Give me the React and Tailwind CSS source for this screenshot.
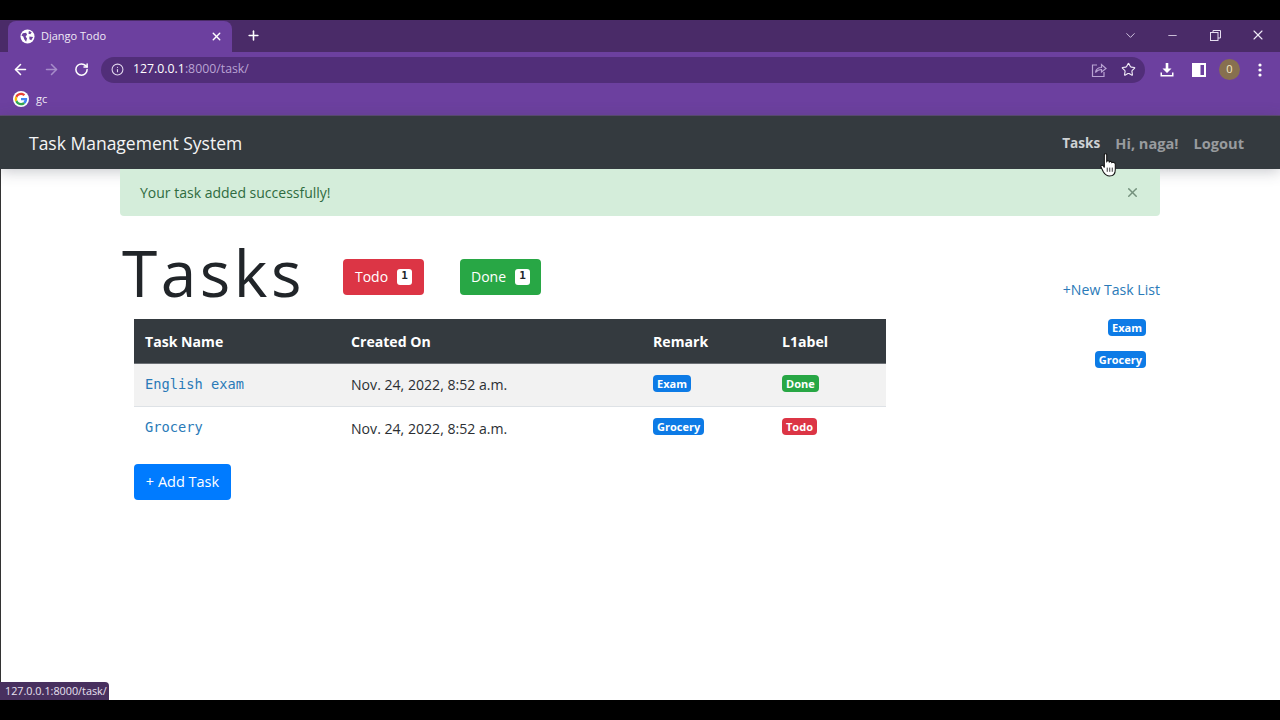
import React from 'react';
import { ArrowLeft, ArrowRight, RotateCw, Info, Star, Plus, X, ChevronDown, Minus } from 'lucide-react';

const sans = { fontFamily: '"Open Sans", "Noto Sans", sans-serif' };
const mono = { fontFamily: '"DejaVu Sans Mono", monospace' };

const GlobeIcon = () => (
  <svg width="15" height="15" viewBox="0 0 16 16">
    <circle cx="8" cy="8" r="7.5" fill="#fff" />
    <path d="M3 4.500 L6.500 4 L7.500 6 L6 8 L7.500 10 L6.500 13.500 L4.500 11 L3.500 8 L1.500 7 Z" fill="#6c409f" />
    <path d="M9.500 2 L12.500 3.500 L11 5.500 L9 5 Z M10 8 L14 8.500 L12 12 L10 11 Z" fill="#6c409f" />
  </svg>
);

const GoogleIcon = () => (
  <svg width="16" height="16" viewBox="0 0 48 48" className="rounded-full bg-white">
    <path fill="#EA4335" d="M24 12c3 0 5.600 1 7.700 3l5-5C33.500 7 29 5 24 5 16.600 5 10.200 9.200 7.100 15.400l5.800 4.500C14.400 15.300 18.800 12 24 12z" />
    <path fill="#4285F4" d="M42.500 24.500c0-1.400-.1-2.600-.4-3.500H24v7h10.500c-.5 2.500-1.900 4.500-4 5.900l5.700 4.400c3.900-3.600 6.300-8.200 6.300-13.800z" />
    <path fill="#FBBC05" d="M12.900 28.100c-.4-1.300-.7-2.700-.7-4.100s.3-2.800.7-4.100l-5.800-4.500C5.800 18 5 20.900 5 24s.8 6 2.100 8.600z" />
    <path fill="#34A853" d="M24 43c5 0 9.300-1.700 12.200-4.700l-5.700-4.400c-1.600 1.100-3.700 1.900-6.500 1.900-5.200 0-9.600-3.300-11.100-7.900l-5.800 4.500C10.200 38.800 16.600 43 24 43z" />
  </svg>
);

const ShareIcon = () => (
  <svg width="16" height="16" viewBox="0 0 16 16" fill="none" stroke="#b9a3d3" strokeWidth="1.200">
    <path d="M6 3 H1.500 V14.500 H13 V10" />
    <path d="M4.500 10.500 C5 7 7.500 5.500 10.500 5.500 V2.500 L15 6.500 L10.500 10 V7.500 C8 7.500 6 8.500 4.500 10.500 Z" />
  </svg>
);

const DownloadIcon = () => (
  <svg width="16" height="16" viewBox="0 0 16 16" fill="#fff">
    <path d="M6.700 1 H9.300 V6.500 H12.500 L8 11 L3.500 6.500 H6.700 Z" />
    <path d="M1.500 10.500 H3 V13 H13 V10.500 H14.500 V14.500 H1.500 Z" />
  </svg>
);

const SidePanelIcon = () => (
  <svg width="14" height="14" viewBox="0 0 14 14">
    <rect width="14" height="14" fill="#fff" />
    <rect x="8.500" y="2" width="3.500" height="10" fill="#6c409f" />
  </svg>
);

const RestoreIcon = () => (
  <svg width="11" height="11" viewBox="0 0 11 11" fill="none" stroke="#e6def0" strokeWidth="1">
    <rect x="0.500" y="2.500" width="7.500" height="8" />
    <path d="M3 2.500 V0.500 H10.500 V8 H8" />
  </svg>
);

const DotsIcon = () => (
  <svg width="4" height="14" viewBox="0 0 4 14" fill="#fff">
    <circle cx="2" cy="2" r="1.600" />
    <circle cx="2" cy="7" r="1.600" />
    <circle cx="2" cy="12" r="1.600" />
  </svg>
);

const HandCursor = () => (
  <svg width="17" height="24" viewBox="0 0 16 23" className="absolute left-[1100px] top-[153px] z-30">
    <path
      d="M4 1.500 C4 .5 6.300 .5 6.300 1.500 V8 C7 7 8.700 7.300 8.800 8.500 C9.500 7.700 11 8 11.200 9.200 C12 8.600 14.500 9 14.500 10.800 V16 C14.500 19.500 12.500 22 9 22 C6 22 4.500 20.500 3 18 L.8 13.500 C.2 12 2.200 11 3.200 12.500 L4 14 Z"
      fill="#fff"
      stroke="#111"
      strokeWidth="1"
    />
    <path d="M6.800 14 V18 M9.200 14 V18 M11.600 14 V18" stroke="#111" strokeWidth=".8" />
  </svg>
);

const Badge = ({ color, children }) => (
  <span className={`inline-block rounded-[4px] px-[4px] py-[2px] text-[11px] font-bold leading-[13px] text-white ${color}`}>
    {children}
  </span>
);

const CountButton = ({ color, label, className }) => (
  <div className={`flex h-[36px] w-[81px] items-center justify-center gap-[9px] rounded-[4px] pb-[1px] text-[14px] text-white ${color} ${className}`}>
    {label}
    <span className="flex h-[16px] w-[15px] items-center justify-center rounded-[3px] bg-white text-[11px] font-semibold text-[#212529]" style={mono}>
      1
    </span>
  </div>
);

const tasks = [
  { name: 'English exam', remark: 'Exam', label: 'Done', labelColor: 'bg-[#28a745]', rowClass: 'bg-[#f2f2f2] border-b border-[#dee2e6] h-[43px]' },
  { name: 'Grocery', remark: 'Grocery', label: 'Todo', labelColor: 'bg-[#dc3545]', rowClass: 'h-[43px]' },
];

const Browser = () => (
  <div className="shrink-0 text-white">
    {/* tab strip */}
    <div className="flex h-[32px] items-end bg-[#4a2b68] pl-[8px]">
      <div className="flex h-[31px] w-[224px] items-center rounded-t-[8px] bg-[#6c409f] pl-[12px] pr-[9px]">
        <GlobeIcon />
        <span className="ml-[6px] flex-1 text-[11px] text-[#f0eaf6]" style={sans}>Django Todo</span>
        <X size={13} strokeWidth={2.5} />
      </div>
      <div className="ml-[14px] mb-[9px]"><Plus size={15} strokeWidth={2.5} /></div>
      <div className="ml-auto mb-[9px] flex items-center">
        <ChevronDown size={15} strokeWidth={1.500} className="mr-[28px] text-[#d8cde6]" />
        <Minus size={13} strokeWidth={1.500} className="mr-[31px] text-[#e6def0]" />
        <RestoreIcon />
        <X size={16} strokeWidth={1.700} className="ml-[29px] mr-[14px] text-[#f0eaf6]" />
      </div>
    </div>
    {/* toolbar */}
    <div className="flex h-[33px] items-center bg-[#6c409f] pl-[12px] pt-[2px]">
      <ArrowLeft size={17} strokeWidth={2.2} />
      <ArrowRight size={17} strokeWidth={2.2} className="ml-[14px] text-[#a68cc9]" />
      <RotateCw size={15} strokeWidth={2.4} className="ml-[14px]" />
      <div className="ml-[12px] flex h-[26px] w-[1044px] items-center rounded-full bg-[#512e79] pl-[10px] pr-[9px]">
        <Info size={13} className="text-[#e0d6ec]" />
        <span className="ml-[9px] text-[12.300px]" style={sans}>
          <span className="text-white">127.0.0.1</span>
          <span className="text-[#b9a3d3]">:8000/task/</span>
        </span>
        <div className="ml-auto flex items-center gap-[14px]">
          <ShareIcon />
          <Star size={15} strokeWidth={1.800} className="text-[#efe9f5]" />
        </div>
      </div>
      <div className="ml-[14px]"><DownloadIcon /></div>
      <div className="ml-[17px]"><SidePanelIcon /></div>
      <div className="ml-[13px] flex h-[21px] w-[21px] items-center justify-center rounded-full bg-[#87704f] text-[11px] text-[#f3e9c8]" style={sans}>0</div>
      <div className="ml-[18px]"><DotsIcon /></div>
    </div>
    {/* bookmarks */}
    <div className="flex h-[31px] items-center border-b border-[#5c4a72] bg-[#6c409f] pb-[2px] pl-[13px]">
      <GoogleIcon />
      <span className="ml-[7px] text-[11px] text-[#f0eaf6]" style={sans}>gc</span>
    </div>
  </div>
);

const Navbar = () => (
  <nav className="relative z-10 flex h-[53px] shrink-0 items-center bg-[#343a3f] pl-[29px] pr-[36px] pt-[2px] shadow-[0_2px_14px_rgba(60,64,80,0.3)]" style={sans}>
    <span className="text-[17.500px] text-[#f4f5f6]">Task Management System</span>
    <div className="ml-auto flex items-center gap-[15px] font-bold">
      <span className="text-[13.600px] text-[#ced1d4]">Tasks</span>
      <span className="text-[14.600px] text-[#989b9e]">Hi, naga!</span>
      <span className="text-[14.600px] text-[#989b9e]">Logout</span>
    </div>
  </nav>
);

const TaskTable = () => (
  <table className="ml-[14px] mt-[8px] w-[752px] table-fixed border-collapse text-[14.100px]">
    <thead>
      <tr className="h-[44px] border-b border-[#6c7075] bg-[#343a3f] text-left font-bold text-white">
        <th className="w-[205px] pl-[11px] pt-[1px]">Task Name</th>
        <th className="w-[302px] pl-[12px] pt-[1px]">Created On</th>
        <th className="w-[129px] pl-[12px] pt-[1px]">Remark</th>
        <th className="pl-[12px] pt-[1px]">L1abel</th>
      </tr>
    </thead>
    <tbody>
      {tasks.map((t) => (
        <tr key={t.name} className={t.rowClass}>
          <td className="pb-[1px] pl-[11px] text-[13.700px] font-light text-[#2a7ab8]" style={mono}>{t.name}</td>
          <td className="pl-[12px] pt-[1px] text-[#2b2f33]">Nov. 24, 2022, 8:52 a.m.</td>
          <td className="pb-[4px] pl-[12px]"><Badge color="bg-[#0d7be6]">{t.remark}</Badge></td>
          <td className="pb-[4px] pl-[12px]"><Badge color={t.labelColor}>{t.label}</Badge></td>
        </tr>
      ))}
    </tbody>
  </table>
);

const App = () => (
  <div className="relative flex h-[720px] w-[1280px] flex-col overflow-hidden bg-black">
    <div className="h-[20px] shrink-0" />
    <Browser />
    <Navbar />
    <main className="flex-1 bg-white shadow-[inset_1px_0_0_#333]" style={sans}>
      <div className="mx-auto w-[1040px]">
        <div className="relative z-20 flex h-[47px] items-center justify-between rounded-b-[4px] bg-[#d4edda] pl-[20px] pr-[20px] text-[14px] text-[#2f6b40]">
          Your task added successfully!
          <X size={15} strokeWidth={2.4} className="text-[#74917d]" />
        </div>
        <div className="flex">
          <div className="w-[900px]">
            <div className="mt-[19px] flex h-[76px] items-center">
              <h1 className="ml-[2px] w-[221px] text-[64px] font-normal leading-none tracking-[3.500px] text-[#212529]">Tasks</h1>
              <CountButton color="bg-[#dc3545]" label="Todo" className="mt-[8px]" />
              <CountButton color="bg-[#28a745]" label="Done" className="ml-[36px] mt-[8px]" />
            </div>
            <TaskTable />
            <div className="ml-[14px] mt-[15px] flex h-[36px] w-[97px] items-center justify-center rounded-[4px] bg-[#007bff] text-[14.500px] text-white">
              + Add Task
            </div>
          </div>
          <aside className="flex flex-1 flex-col items-end pt-[64px]">
            <span className="text-[14.100px] leading-[20px] text-[#2a7ab8]">+New Task List</span>
            <div className="mr-[14px] mt-[19px] flex flex-col items-end gap-[15px]">
              <Badge color="bg-[#0d7be6]">Exam</Badge>
              <Badge color="bg-[#0d7be6]">Grocery</Badge>
            </div>
          </aside>
        </div>
      </div>
    </main>
    <div className="h-[20px] shrink-0" />
    <HandCursor />
    {/* link status bubble */}
    <div className="absolute bottom-[20px] left-0 z-20 rounded-tr-[4px] bg-[#48305f] py-[2px] pl-[5px] pr-[2px] text-[10.800px] leading-[14px] text-[#e9e2f1]" style={sans}>
      127.0.0.1:8000/task/
    </div>
  </div>
);

export default App;
